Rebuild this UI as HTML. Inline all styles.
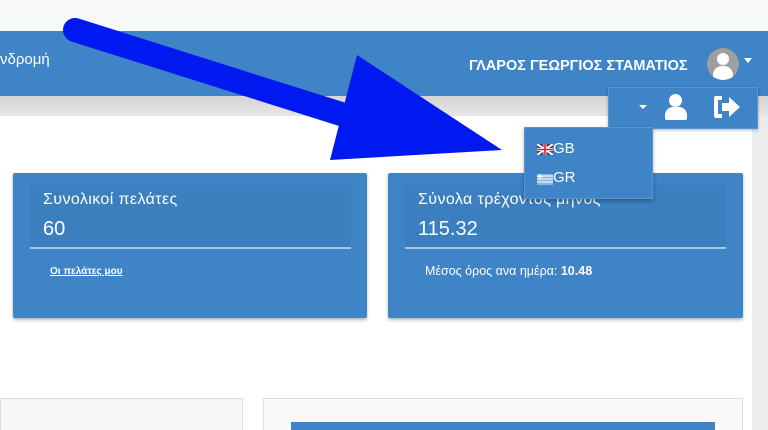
<!DOCTYPE html>
<html style="width:768px;height:430px;overflow:hidden"><head><meta charset="utf-8"><style>
*{margin:0;padding:0;box-sizing:border-box}
body{width:768px;height:430px;overflow:hidden;position:relative;background:#ececec;font-family:"Liberation Sans","DejaVu Sans",sans-serif;color:#fff}
.abs{position:absolute}
.card{position:absolute;background:#3f84c6;border-radius:2px;box-shadow:0 2px 3px rgba(0,0,0,.3)}
.inner{position:absolute;background:#3b7fbf;border-bottom:2px solid #a9c6e3}
</style></head><body>
<div class="abs" style="left:0;top:0;width:768px;height:31px;background:#f7f8fa"></div>
<div class="abs" style="left:0;top:31px;width:768px;height:65px;background:#3f84c6"></div>
<div class="abs" style="left:0;top:96px;width:768px;height:20px;background:linear-gradient(#d4d4d4,#e6e6e6)"></div>
<div class="abs" style="left:0;top:116px;width:752px;height:314px;background:#fff"></div>
<div class="abs" style="left:0;top:51px;font-size:15px">νδρομή</div>
<div class="abs" style="left:469px;top:58px;font-size:14.5px;font-weight:bold">ΓΛΑΡΟΣ ΓΕΩΡΓΙΟΣ ΣΤΑΜΑΤΙΟΣ</div>
<div class="abs" style="left:707px;top:48px;width:32px;height:32px;border-radius:50%;background:#9e9e9e;overflow:hidden">
 <div class="abs" style="left:10px;top:5px;width:12px;height:12px;border-radius:50%;background:#fff"></div>
 <div class="abs" style="left:6px;top:18px;width:20px;height:16px;border-radius:9px 9px 0 0;background:#fff"></div>
</div>
<div class="abs" style="left:744px;top:58px;border:4px solid transparent;border-top:5px solid #fff"></div>

<div class="card" style="left:13px;top:173px;width:354px;height:145px">
 <div class="inner" style="left:17px;top:12px;width:321px;height:64px"></div>
 <div class="abs" style="left:30px;top:18px;font-size:16px;letter-spacing:0.4px">Συνολικοί πελάτες</div>
 <div class="abs" style="left:30px;top:45px;font-size:20px">60</div>
 <div class="abs" style="left:37px;top:93px;font-size:10px;font-weight:bold;text-decoration:underline">Οι πελάτες μου</div>
</div>
<div class="card" style="left:388px;top:173px;width:355px;height:145px">
 <div class="inner" style="left:17px;top:12px;width:321px;height:64px"></div>
 <div class="abs" style="left:30px;top:18px;font-size:16px;letter-spacing:0.4px">Σύνολα τρέχοντος μηνος</div>
 <div class="abs" style="left:30px;top:45px;font-size:20px">115.32</div>
 <div class="abs" style="left:37px;top:91px;font-size:12.5px">Μέσος όρος ανα ημέρα: <b>10.48</b></div>
</div>
<div class="abs" style="left:0;top:398px;width:243px;height:40px;background:#f7f7f7;border:1px solid #ddd"></div>
<div class="abs" style="left:263px;top:398px;width:480px;height:40px;background:#fafafa;border:1px solid #ddd"></div>
<div class="abs" style="left:291px;top:422px;width:424px;height:20px;background:#3f84c6"></div>

<div class="abs" style="left:608px;top:87px;width:150px;height:42px;background:#3f84c6;border:1px solid #5a95cc;box-shadow:0 1px 3px rgba(0,0,0,.3)"></div>
<div class="abs" style="left:639px;top:105px;border:4px solid transparent;border-top:4px solid #fff"></div>
<div class="abs" style="left:669px;top:94px;width:13px;height:13px;border-radius:50%;background:#fff"></div>
<div class="abs" style="left:665px;top:107px;width:22px;height:13px;border-radius:8px 8px 2px 2px;background:#fff"></div>
<svg class="abs" style="left:712px;top:94px" width="30" height="26" viewBox="0 0 30 26"><path d="M10 2H4Q2 2 2 4V22Q2 24 4 24H10V20H6V6H10Z" fill="#fff"/><path d="M10 9H17V3L28 13L17 23V17H10Z" fill="#fff"/></svg>

<div class="abs" style="left:524px;top:127px;width:129px;height:72px;background:#3f84c6;border:1px solid #5a95cc;box-shadow:0 2px 4px rgba(0,0,0,.3)"></div>
<svg class="abs" style="left:537px;top:144px" width="16" height="11"><rect width="16" height="11" fill="#2a3f8f"/><path d="M0 0L16 11M16 0L0 11" stroke="#fff" stroke-width="2"/><path d="M8 0V11M0 5.5H16" stroke="#fff" stroke-width="3"/><path d="M8 0V11M0 5.5H16" stroke="#d22" stroke-width="1.6"/></svg>
<div class="abs" style="left:553px;top:140px;font-size:15px">GB</div>
<svg class="abs" style="left:537px;top:174px" width="16" height="11"><rect width="16" height="11" fill="#8ab4e0"/><path d="M0 2H16M0 5H16M0 8H16" stroke="#fff" stroke-width="1"/><path d="M3 0V5M0 2.5H6" stroke="#fff" stroke-width="1.2"/></svg>
<div class="abs" style="left:553px;top:169px;font-size:15px">GR</div>

<svg class="abs" style="left:0;top:0" width="768" height="430">
<line x1="75" y1="30" x2="360" y2="120" stroke="#0019f0" stroke-width="24" stroke-linecap="round"/>
<polygon points="357,55 330,160 502,150" fill="#0019f0"/>
</svg>
</body></html>
